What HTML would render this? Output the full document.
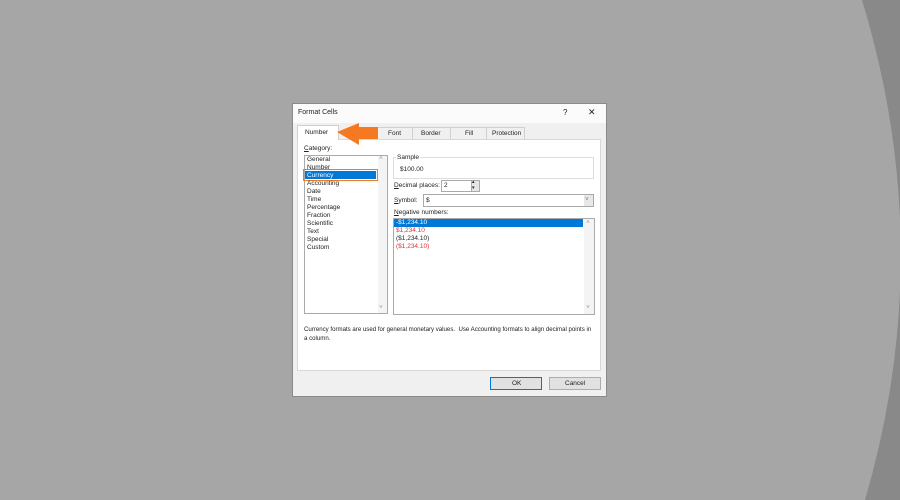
<!DOCTYPE html>
<html><head><style>
*{margin:0;padding:0;box-sizing:border-box}
body{width:900px;height:500px;overflow:hidden;background:#a6a6a6;position:relative;font-family:"Liberation Sans",sans-serif;font-size:6.5px;color:#222}
.a{position:absolute}
.t{position:absolute;white-space:nowrap;line-height:8px}
</style></head><body>
<svg class="a" style="left:0;top:0" width="900" height="500"><path d="M862 0 Q938 250 865 500 L900 500 L900 0 Z" fill="#898989"/></svg>
<div class="a" style="left:292px;top:103px;width:315px;height:294px;background:#f0f0f0;border:1px solid #8a8a8a"></div>
<div class="a" style="left:293px;top:104px;width:313px;height:19px;background:#fbfbfb"></div>
<div class="t" style="left:298px;top:109px;font-size:7px">Format Cells</div>
<div class="t" style="left:563px;top:109px;font-size:8px">?</div>
<div class="t" style="left:588px;top:108px;font-size:9px">✕</div>
<div class="a" style="left:377px;top:127px;width:148px;height:13px;background:#f0f0f0;border:1px solid #d0d0d0"></div>
<div class="a" style="left:412px;top:127px;width:1px;height:12px;background:#d0d0d0"></div>
<div class="a" style="left:450px;top:127px;width:1px;height:12px;background:#d0d0d0"></div>
<div class="a" style="left:486px;top:127px;width:1px;height:12px;background:#d0d0d0"></div>
<div class="t" style="left:388px;top:130px">Font</div>
<div class="t" style="left:421px;top:130px">Border</div>
<div class="t" style="left:465px;top:130px">Fill</div>
<div class="t" style="left:492px;top:130px">Protection</div>
<div class="a" style="left:297px;top:139px;width:304px;height:232px;background:#fff;border:1px solid #d8d8d8"></div>
<div class="a" style="left:297px;top:125px;width:42px;height:15px;background:#fff;border:1px solid #d0d0d0;border-bottom:none"></div>
<div class="t" style="left:305px;top:129px">Number</div>
<svg class="a" style="left:336px;top:121px" width="44" height="26"><path d="M1 11 L23 2 L23 6 L42 6 L42 18 L23 18 L23 24 Z" fill="#f47920"/></svg>
<div class="t" style="left:304px;top:145px"><u>C</u>ategory:</div>
<div class="a" style="left:304px;top:155px;width:84px;height:159px;border:1px solid #aaa;background:#fff"></div>
<div class="a" style="left:378px;top:156px;width:9px;height:157px;background:#f4f4f4"></div>
<div class="t" style="left:379px;top:155px;color:#999">˄</div>
<div class="t" style="left:379px;top:304px;color:#999">˅</div>
<div class="a" style="left:303px;top:169px;width:75px;height:12px;border:1.5px solid #f47920"></div>
<div class="a" style="left:305px;top:171px;width:71px;height:8px;background:#0078d7"></div>
<div class="t" style="left:307px;top:155.5px">General<br>Number<br><span style="color:#fff">Currency</span><br>Accounting<br>Date<br>Time<br>Percentage<br>Fraction<br>Scientific<br>Text<br>Special<br>Custom</div>
<div class="a" style="left:393px;top:157px;width:201px;height:22px;border:1px solid #ddd"></div>
<div class="t" style="left:396px;top:154px;background:#fff;padding:0 1px">Sample</div>
<div class="t" style="left:400px;top:166px">$100.00</div>
<div class="t" style="left:394px;top:182px"><u>D</u>ecimal places:</div>
<div class="a" style="left:441px;top:180px;width:39px;height:12px;border:1px solid #aaa;background:#fff"></div>
<div class="t" style="left:444px;top:182px">2</div>
<div class="a" style="left:471px;top:181px;width:8px;height:10px;background:#e5e5e5;border-left:1px solid #aaa"></div>
<div class="t" style="left:472px;top:178px;font-size:5px">▴</div><div class="t" style="left:472px;top:184px;font-size:5px">▾</div>
<div class="t" style="left:394px;top:197px"><u>S</u>ymbol:</div>
<div class="a" style="left:423px;top:194px;width:171px;height:13px;border:1px solid #aaa;background:#fff"></div>
<div class="a" style="left:584px;top:195px;width:9px;height:11px;background:#e8e8e8"></div>
<div class="t" style="left:426px;top:197px">$</div>
<div class="t" style="left:585px;top:196px;color:#777">˅</div>
<div class="t" style="left:394px;top:209px"><u>N</u>egative numbers:</div>
<div class="a" style="left:393px;top:218px;width:202px;height:97px;border:1px solid #aaa;background:#fff"></div>
<div class="a" style="left:584px;top:219px;width:10px;height:95px;background:#f4f4f4"></div>
<div class="t" style="left:586px;top:219px;color:#999">˄</div>
<div class="t" style="left:586px;top:304px;color:#999">˅</div>
<div class="a" style="left:394px;top:219px;width:189px;height:8px;background:#0078d7"></div>
<div class="t" style="left:396px;top:219px"><span style="color:#fff">-$1,234.10</span><br><span style="color:#e03030">$1,234.10</span><br>($1,234.10)<br><span style="color:#e03030">($1,234.10)</span></div>
<div class="t" style="left:304px;top:325px;line-height:9px;font-size:6.1px">Currency formats are used for general monetary values.&nbsp; Use Accounting formats to align decimal points in<br>a column.</div>
<div class="a" style="left:490px;top:377px;width:52px;height:13px;background:#e1e1e1;border:1px solid #0078d7"></div>
<div class="t" style="left:512px;top:380px">OK</div>
<div class="a" style="left:549px;top:377px;width:52px;height:13px;background:#e1e1e1;border:1px solid #adadad"></div>
<div class="t" style="left:565px;top:380px">Cancel</div>
</body></html>
